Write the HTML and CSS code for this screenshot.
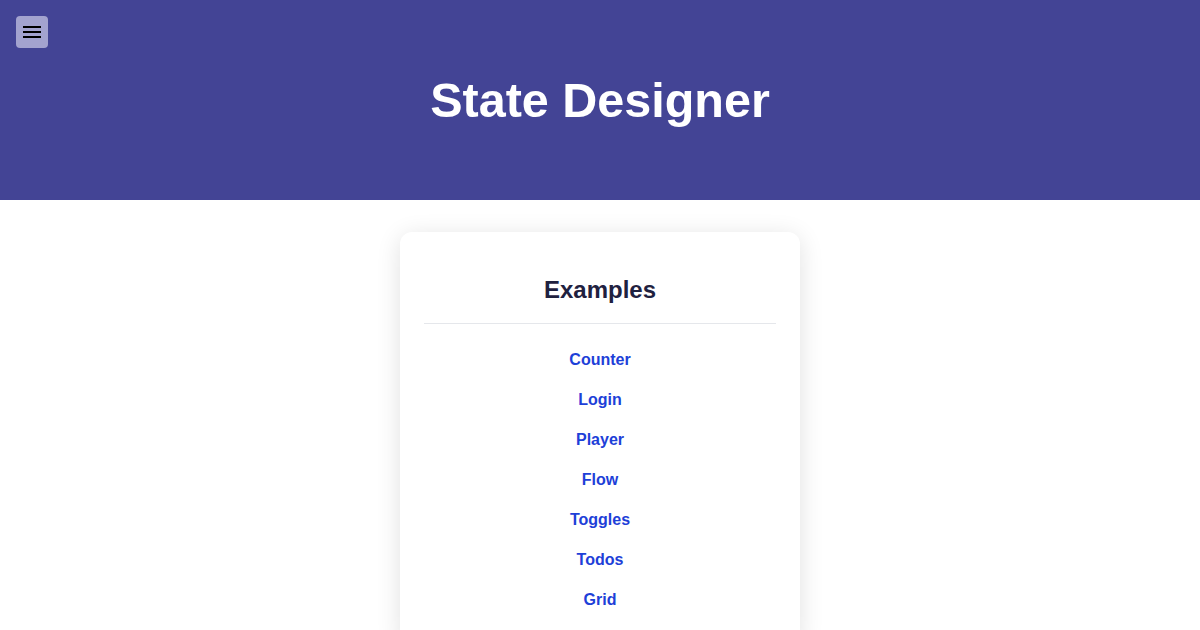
FILE: index.html
```html
<!DOCTYPE html>
<html lang="en">
<head>
    <meta charset="UTF-8">
    <meta name="viewport" content="width=device-width, initial-scale=1.0">
    <title>State Designer</title>
    <link rel="stylesheet" href="styles.css">
</head>
<body>
    <header class="hero">
        <button class="menu-btn" aria-label="Menu">
            <svg width="18" height="12" viewBox="0 0 18 12">
                <rect x="0" y="0" width="18" height="2" fill="#000"/>
                <rect x="0" y="5" width="18" height="2" fill="#000"/>
                <rect x="0" y="10" width="18" height="2" fill="#000"/>
            </svg>
        </button>
        <h1>State Designer</h1>
    </header>

    <main class="content">
        <div class="card">
            <h2>Examples</h2>
            <ul class="examples">
                <li><a href="#">Counter</a></li>
                <li><a href="#">Login</a></li>
                <li><a href="#">Player</a></li>
                <li><a href="#">Flow</a></li>
                <li><a href="#">Toggles</a></li>
                <li><a href="#">Todos</a></li>
                <li><a href="#">Grid</a></li>
            </ul>
        </div>
    </main>
</body>
</html>
```

FILE: styles.css
```css
body {
    font-family: "Liberation Sans", Arial, sans-serif;
    margin: 0;
    background: #fff;
}
.hero {
    position: relative;
    height: 200px;
    background-color: #434495;
    display: flex;
    align-items: center;
    justify-content: center;
}
.hero h1 {
    margin: 0;
    color: #fff;
    font-size: 48.5px;
    font-weight: bold;
    line-height: 56px;
}
.menu-btn {
    position: absolute;
    top: 16px;
    left: 16px;
    width: 32px;
    height: 32px;
    padding: 0;
    border: none;
    border-radius: 4px;
    background-color: #a3a3cf;
    display: flex;
    align-items: center;
    justify-content: center;
    cursor: pointer;
}
.content {
    display: flex;
    justify-content: center;
    padding-top: 32px;
}
.card {
    width: 400px;
    box-sizing: border-box;
    padding: 41px 24px 24px;
    background: #fff;
    border-radius: 12px;
    box-shadow: 0 4px 24px rgba(0, 0, 0, 0.12);
}
.card h2 {
    margin: 0;
    padding-bottom: 16px;
    border-bottom: 1px solid #e5e7eb;
    text-align: center;
    font-size: 24px;
    line-height: 34px;
    color: #1f2140;
}
.examples {
    list-style: none;
    margin: 0;
    padding: 16px 0 0;
    text-align: center;
}
.examples li {
    line-height: 40px;
}
.examples a {
    color: #1d40d8;
    font-size: 16px;
    font-weight: bold;
    text-decoration: none;
}
```
